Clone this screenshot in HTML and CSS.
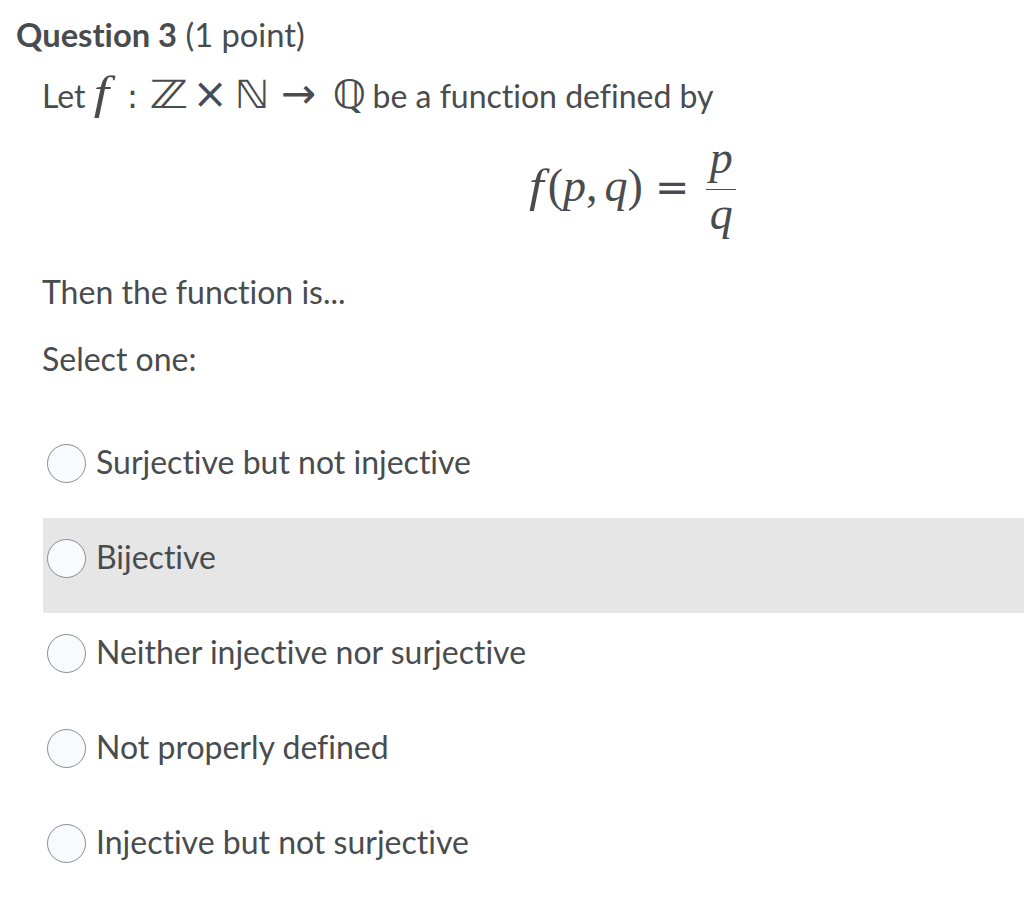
FILE: index.html
```html
<!DOCTYPE html>
<html>
<head>
<meta charset="utf-8">
<link rel="stylesheet" href="styles.css">
</head>
<body>
<div class="question">
  <h2 class="title"><strong>Question 3</strong> <span class="pts">(1 point)</span></h2>
  <div class="content">
    <p class="stem">Let<span class="sym s-f"><span class="mi">f</span></span><span class="sym s-colon">:</span><span class="sym s-z"><span class="ds sz">ℤ</span></span><span class="sym s-times">×</span><span class="sym s-n"><span class="ds sn">ℕ</span></span><span class="sym s-arrow">→</span><span class="sym s-q"><span class="ds sq">ℚ</span></span>be a function defined by</p>
    <div class="display">
      <span class="mrow"><span class="mi f">f</span><span class="mp lp">(</span><span class="mi">p</span><span class="mp comma">,</span><span class="mi">q</span><span class="mp rp">)</span><span class="eq">=</span></span>
      <span class="frac"><span class="num mi">p</span><span class="den mi">q</span></span>
    </div>
    <p class="line then">Then the function is...</p>
    <p class="line select">Select one:</p>
    <div class="options">
      <label class="opt"><input type="radio" name="a" class="radio"><span>Surjective but not injective</span></label>
      <label class="opt hl"><input type="radio" name="a" class="radio"><span>Bijective</span></label>
      <label class="opt"><input type="radio" name="a" class="radio"><span>Neither injective nor surjective</span></label>
      <label class="opt"><input type="radio" name="a" class="radio"><span>Not properly defined</span></label>
      <label class="opt"><input type="radio" name="a" class="radio"><span>Injective but not surjective</span></label>
    </div>
  </div>
</div>
</body>
</html>
```

FILE: styles.css
```css
html, body {
  margin: 0;
  padding: 0;
  background: #ffffff;
}
body {
  font-family: Lato, "Open Sans", sans-serif;
  font-size: 32px;
  line-height: 38px;
  color: #494c4e;
  overflow: hidden;
  font-variant-ligatures: none;
}
.question {
  padding-top: 16px;
}
.title {
  margin: 0 0 0 16px;
  font-size: 32.7px;
  line-height: 38px;
  font-weight: 400;
}
.title strong {
  font-weight: 700;
}
.content {
  padding-left: 42px;
}
.stem {
  margin: 23px 0 0 0;
  line-height: 38px;
  height: 38px;
  white-space: nowrap;
}
.mi {
  font-family: "Liberation Serif", "DejaVu Serif", serif;
  font-style: italic;
}
.sym {
  display: inline-block;
  text-align: center;
  font-family: "DejaVu Sans", sans-serif;
  line-height: 20px;
  vertical-align: baseline;
}
.s-f { width: 31px; font-size: 46px; }
.s-f .mi { display: inline-block; transform: scaleX(1.2); }
.s-colon { width: 32px; font-size: 34px; }
.s-z { width: 40px; }
.s-times { width: 43px; font-size: 42px; }
.s-n { width: 40px; }
.s-arrow { width: 54px; font-size: 42px; }
.s-q { width: 47px; }
.ds {
  display: inline-block;
  font-family: "DejaVu Sans", sans-serif;
  font-size: 39px;
}
.sz { transform: scaleX(1.35); }
.sn { transform: scaleX(1.12); }
.sq { transform: scaleX(1.1); }
.display {
  display: flex;
  align-items: flex-start;
  padding-left: 485px;
  margin-top: 25px;
  height: 110px;
}
.mrow {
  font-size: 46px;
  line-height: 50px;
  white-space: nowrap;
  margin-top: 19px;
}
.mp {
  font-family: "Liberation Serif", serif;
  font-size: 46px;
}
.f {
  display: inline-block;
  transform: scaleX(1.15);
  margin: 0 5px 0 3px;
}
.comma { margin-right: 7px; }
.eq {
  font-family: "DejaVu Sans", sans-serif;
  font-size: 41px;
  margin: 0 17px 0 12px;
}
.frac {
  display: flex;
  flex-direction: column;
  align-items: stretch;
  width: 30px;
  margin-top: -2px;
}
.num, .den {
  font-size: 46px;
  line-height: 40px;
  text-align: center;
}
.num {
  border-bottom: 1.5px solid #494c4e;
  padding-bottom: 11px;
}
.den {
  padding-top: 4px;
}
.line {
  margin: 0;
}
.then {
  margin-top: 23px;
}
.select {
  margin-top: 29px;
}
.options {
  margin-top: 45px;
}
.opt {
  display: flex;
  align-items: flex-start;
  height: 95px;
  box-sizing: border-box;
  padding: 20px 0 0 4px;
  margin-left: 1px;
}
.opt.hl {
  background: #e6e6e6;
}
.radio {
  appearance: none;
  -webkit-appearance: none;
  width: 39px;
  height: 39px;
  margin: 1px 10px 0 0;
  border-radius: 50%;
  border: 1.5px solid #8a8d90;
  background: #f9fafe;
  box-sizing: border-box;
  flex: none;
}
```
